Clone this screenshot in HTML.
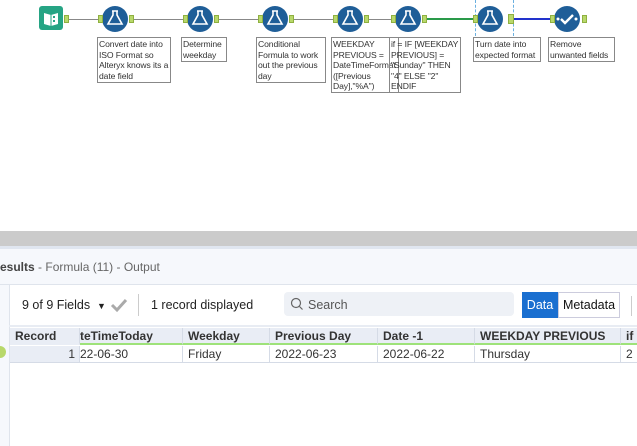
<!DOCTYPE html><html><head><style>
body{margin:0;width:637px;height:446px;overflow:hidden;background:#fff;font-family:"Liberation Sans",sans-serif;position:relative}
.a{position:absolute}
.note{position:absolute;border:1px solid #888;font-size:8.6px;line-height:10.6px;color:#333;padding:1px 1px;box-sizing:border-box;background:#fff;letter-spacing:-0.1px}
.c{position:absolute;width:26px;height:26px;border-radius:50%;background:#1f5e98}
.p{position:absolute;width:5px;height:8px;background:#b8d86a;border:1px solid #8fb040;box-sizing:border-box}
.ln{position:absolute;height:1px;background:#888}
.th{position:absolute;top:328px;height:17px;font-size:12px;font-weight:bold;color:#333;line-height:17px;padding-left:5px;box-sizing:border-box;background:#e9edf5;border-bottom:2px solid #9ee27a;border-right:1px solid #d5dbe6}
.td{position:absolute;top:346px;height:17px;font-size:12px;color:#333;line-height:17px;padding-left:5px;box-sizing:border-box;border-right:1px solid #d5dbe6;border-bottom:1px solid #d5dbe6}
</style></head><body>
<div class="a" style="left:39px;top:6px;width:24px;height:24px;background:#26a484;border-radius:3px"></div>
<svg class="a" style="left:39px;top:6px" width="24" height="24"><path d="M5 7v11l7 2 7-2V7l-7 2z" fill="#fff"/><path d="M12 9v11" stroke="#26a484"/><rect x="14" y="10" width="2" height="2" fill="#26a484"/><rect x="14" y="14" width="2" height="2" fill="#26a484"/></svg>
<div class="ln" style="left:68px;top:19px;width:36px"></div>
<div class="ln" style="left:131px;top:19px;width:56px"></div>
<div class="ln" style="left:216px;top:19px;width:46px"></div>
<div class="ln" style="left:291px;top:19px;width:46px"></div>
<div class="ln" style="left:366px;top:19px;width:29px"></div>
<div class="ln" style="left:424px;top:18px;width:54px;height:2px;background:#2a9a4a"></div>
<div class="ln" style="left:511px;top:18px;width:44px;height:2px;background:#2233cc"></div>
<div class="a" style="left:475px;top:0;width:0;height:36px;border-left:1px dashed #6ab0e0"></div>
<div class="a" style="left:513px;top:0;width:0;height:36px;border-left:1px dashed #6ab0e0"></div>
<div class="p" style="left:64px;top:15px"></div>
<div class="c" style="left:102px;top:6px"></div><div class="p" style="left:98px;top:15px"></div><div class="p" style="left:129px;top:15px"></div>
<div class="c" style="left:187px;top:6px"></div><div class="p" style="left:183px;top:15px"></div><div class="p" style="left:214px;top:15px"></div>
<div class="c" style="left:262px;top:6px"></div><div class="p" style="left:258px;top:15px"></div><div class="p" style="left:289px;top:15px"></div>
<div class="c" style="left:337px;top:6px"></div><div class="p" style="left:333px;top:15px"></div><div class="p" style="left:364px;top:15px"></div>
<div class="c" style="left:395px;top:6px"></div><div class="p" style="left:391px;top:15px"></div><div class="p" style="left:422px;top:15px"></div>
<div class="c" style="left:477px;top:6px"></div><div class="p" style="left:473px;top:15px"></div><div class="p" style="left:508px;top:14px;width:6px;height:10px"></div>
<div class="c" style="left:554px;top:6px"></div><div class="p" style="left:550px;top:15px"></div><div class="p" style="left:582px;top:15px"></div>
<svg class="a" style="left:0;top:0" width="637" height="40">
<g fill="none" stroke="#fff" stroke-width="1.6">
<path d="M112 11h6M113 11v4l-5 9h14l-5-9v-4"/><path d="M197 11h6M198 11v4l-5 9h14l-5-9v-4"/><path d="M272 11h6M273 11v4l-5 9h14l-5-9v-4"/><path d="M347 11h6M348 11v4l-5 9h14l-5-9v-4"/><path d="M405 11h6M406 11v4l-5 9h14l-5-9v-4"/><path d="M487 11h6M488 11v4l-5 9h14l-5-9v-4"/>
<path d="M561 19l4 4 8-8" stroke-width="2.4"/></g>
<circle cx="558" cy="19" r="1.5" fill="#fff"/><circle cx="576" cy="19" r="1.5" fill="#fff"/>
</svg>
<div class="note" style="left:97px;top:37px;width:74px;height:46px">Convert date into ISO Format so Alteryx knows its a date field</div>
<div class="note" style="left:181px;top:37px;width:46px;height:25px">Determine weekday</div>
<div class="note" style="left:256px;top:37px;width:70px;height:46px">Conditional Formula to work out the previous day</div>
<div class="note" style="left:331px;top:37px;width:68px;height:56px;overflow:hidden;white-space:nowrap">WEEKDAY<br>PREVIOUS =<br>DateTimeFormat<br>([Previous<br>Day],"%A")</div>
<div class="note" style="left:389px;top:37px;width:72px;height:56px;background:transparent">if = IF [WEEKDAY PREVIOUS] = "Sunday" THEN "4" ELSE "2" ENDIF</div>
<div class="note" style="left:473px;top:37px;width:68px;height:25px">Turn date into expected format</div>
<div class="note" style="left:548px;top:37px;width:67px;height:25px">Remove unwanted fields</div>
<div class="a" style="left:0;top:231px;width:637px;height:15px;background:#cbcbcb"></div>
<div class="a" style="left:0;top:246px;width:637px;height:3px;background:#e0e6f0"></div>
<div class="a" style="left:0;top:249px;width:637px;height:35px;background:#f6f8fc;border-bottom:1px solid #dfe4ec"></div>
<div class="a" style="left:0;top:259px;font-size:12px;color:#444;line-height:16px"><b>esults</b> <span style="color:#666">- Formula (11) - Output</span></div>
<div class="a" style="left:0;top:285px;width:9px;height:161px;background:#f6f8fc;border-right:1px solid #dfe4ec"></div>
<div class="a" style="left:0;top:346px;width:6px;height:12px;background:#b8d86a;border-radius:0 6px 6px 0"></div>
<div class="a" style="left:22px;top:297px;font-size:12.5px;color:#222;line-height:16px">9 of 9 Fields&nbsp; <span style="font-size:9px">▼</span></div>
<svg class="a" style="left:110px;top:297px" width="18" height="16"><path d="M2 8l5 5 9-10" fill="none" stroke="#aaa" stroke-width="3"/></svg>
<div class="a" style="left:138px;top:294px;width:1px;height:22px;background:#ccc"></div>
<div class="a" style="left:151px;top:297px;font-size:12.5px;color:#222;line-height:16px">1 record displayed</div>
<div class="a" style="left:284px;top:292px;width:230px;height:24px;background:#eef1f6;border-radius:4px"></div>
<svg class="a" style="left:290px;top:297px" width="14" height="14"><circle cx="6" cy="6" r="4.5" fill="none" stroke="#666" stroke-width="1.2"/><path d="M9.5 9.5l3 3" stroke="#666" stroke-width="1.2"/></svg>
<div class="a" style="left:308px;top:297px;font-size:12.5px;color:#555;line-height:16px">Search</div>
<div class="a" style="left:522px;top:292px;width:36px;height:26px;background:#1a6fd0;color:#fff;font-size:12.5px;line-height:26px;text-align:center">Data</div>
<div class="a" style="left:558px;top:292px;width:60px;height:24px;border:1px solid #ccd;color:#111;font-size:12.5px;line-height:24px;text-align:center">Metadata</div>
<div class="a" style="left:631px;top:296px;width:1px;height:20px;background:#ccc"></div>
<div class="a" style="left:9px;top:325px;width:628px;height:2px;background:#e8ecf3"></div>
<div class="th" style="left:10px;width:70px;border-bottom-color:#e9edf5">Record</div>
<div class="th" style="left:80px;width:103px;padding-left:0">teTimeToday</div>
<div class="th" style="left:183px;width:87px">Weekday</div>
<div class="th" style="left:270px;width:108px">Previous Day</div>
<div class="th" style="left:378px;width:97px">Date -1</div>
<div class="th" style="left:475px;width:146px">WEEKDAY PREVIOUS</div>
<div class="th" style="left:621px;width:20px">if</div>
<div class="td" style="left:10px;width:70px;background:#e9edf5;text-align:right;padding-right:4px">1</div>
<div class="td" style="left:80px;width:103px;padding-left:0">22-06-30</div>
<div class="td" style="left:183px;width:87px">Friday</div>
<div class="td" style="left:270px;width:108px">2022-06-23</div>
<div class="td" style="left:378px;width:97px">2022-06-22</div>
<div class="td" style="left:475px;width:146px">Thursday</div>
<div class="td" style="left:621px;width:20px">2</div>
</body></html>
